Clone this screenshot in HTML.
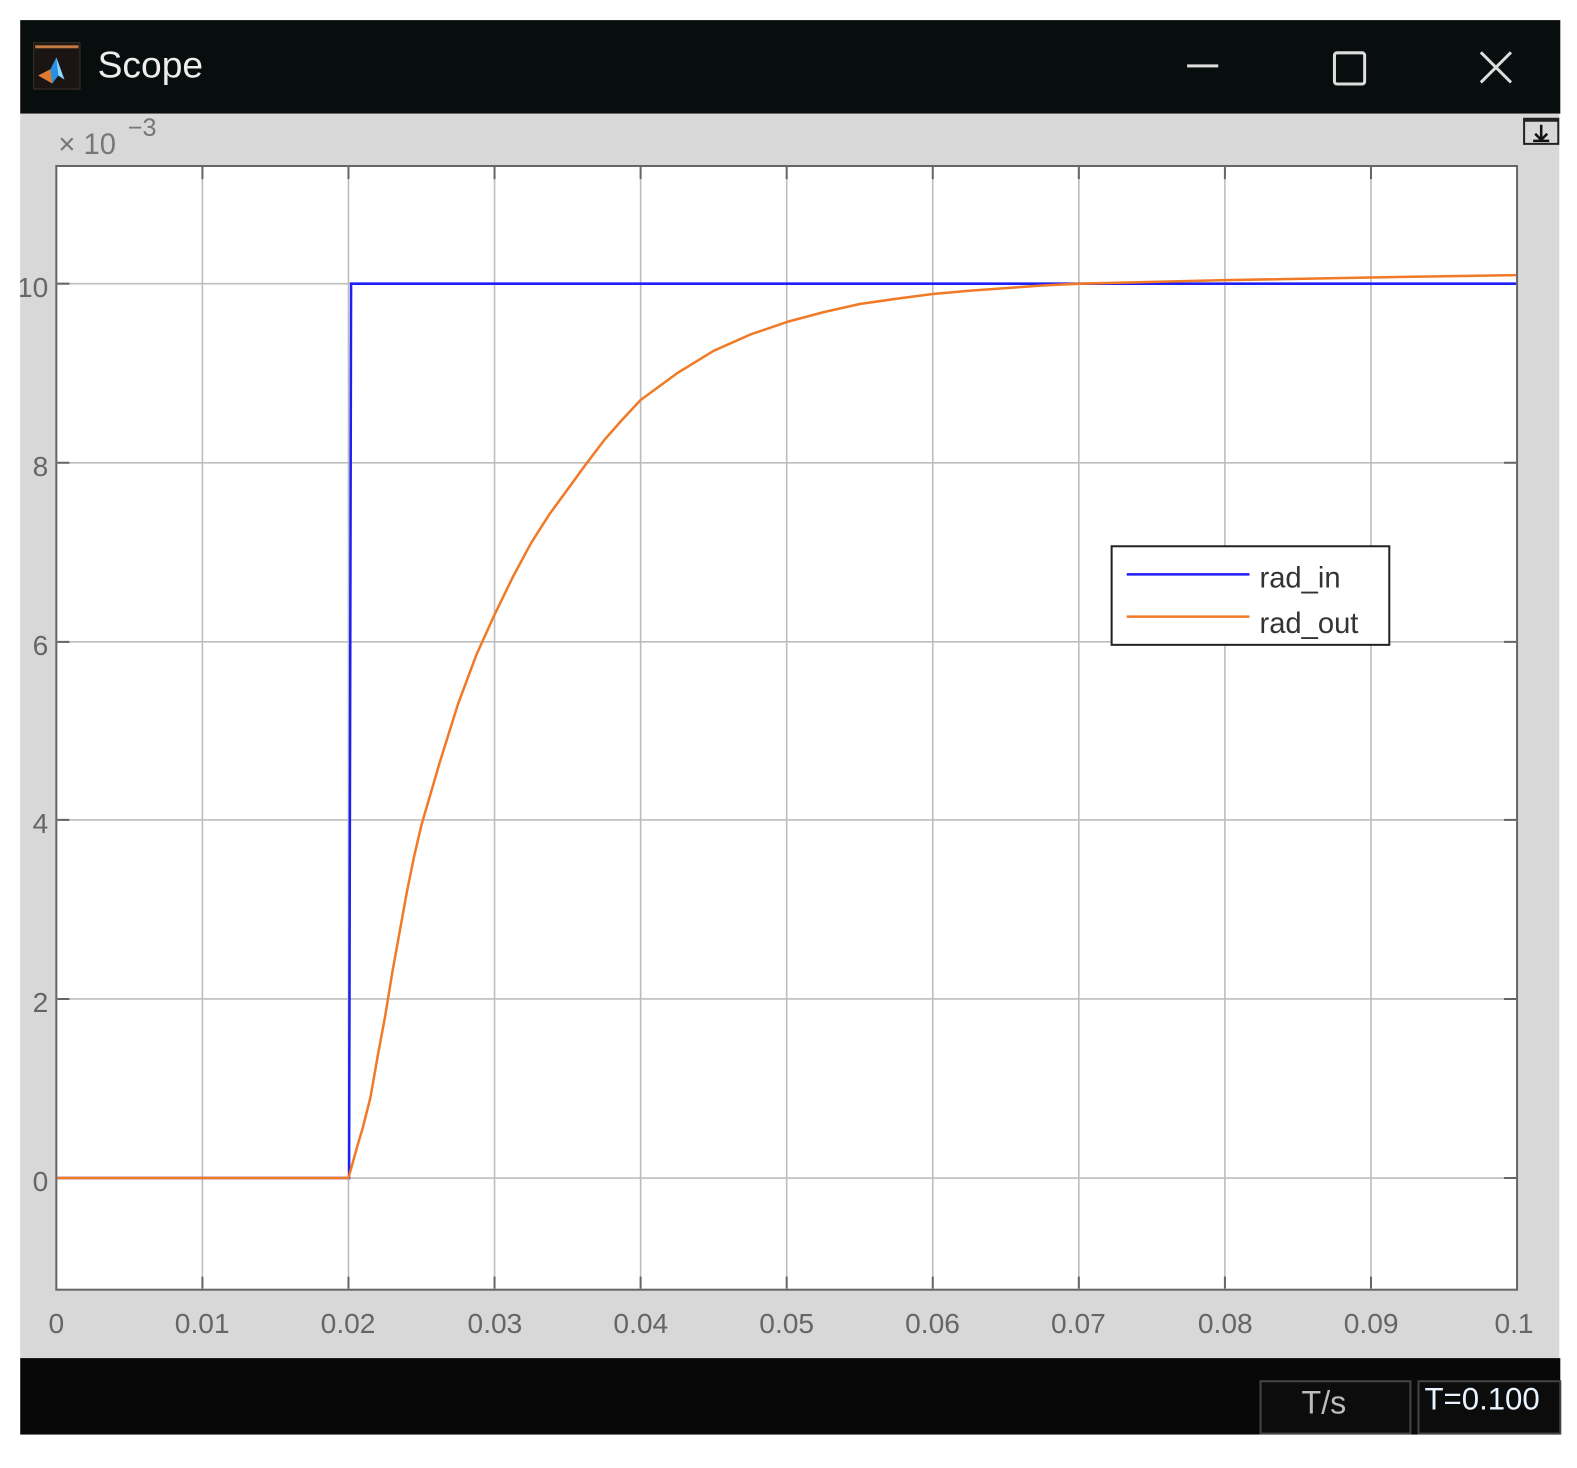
<!DOCTYPE html>
<html><head><style>
html,body{margin:0;padding:0;background:#fff;width:1577px;height:1459px;overflow:hidden;font-family:"Liberation Sans",sans-serif}
.abs{position:absolute}
#w{position:absolute;left:0;top:0;width:1577px;height:1459px;transform:scale(1.006);transform-origin:0 0}
</style></head><body><div id="w">
<div class="abs" style="left:20px;top:20px;width:1531px;height:93px;background:#080d0d"></div>
<div class="abs" style="left:20px;top:113px;width:1530px;height:1237px;background:#d8d8d8"></div>
<div class="abs" style="left:20px;top:1350px;width:1531px;height:76px;background:#080808"></div>
<div class="abs" style="left:33px;top:42px;width:47px;height:47px;background:#1a1512;border:1px solid #3a332d;box-sizing:border-box">
<div style="height:3px;background:#c07a40;margin:2px 1px"></div>
<svg width="45" height="38" viewBox="0 0 45 38" style="position:absolute;left:0;top:6px"><path d="M4 26 L16 20 L22 8 L30 30 L24 26 L18 34 Z" fill="#2a8fe0"/><path d="M4 26 L16 20 L18 34Z" fill="#e07a30"/><path d="M22 8 L30 30 L24 26Z" fill="#8fd8ff"/></svg>
</div>
<div class="abs" style="left:97px;top:44px;font-size:37px;color:#eee">Scope</div>
<div class="abs" style="left:1180px;top:64px;width:31px;height:3px;background:#ddd"></div>
<div class="abs" style="left:1325px;top:51px;width:27px;height:28px;border:3px solid #ddd;border-radius:4px"></div>
<svg class="abs" style="left:1470px;top:50px" width="34" height="34"><path d="M2 2L32 32M32 2L2 32" stroke="#ddd" stroke-width="3"/></svg>
<div class="abs" style="left:1514px;top:117px;width:36px;height:27px;border:2px solid #222;box-sizing:border-box;border-top-width:4px"></div>
<svg class="abs" style="left:1520px;top:122px" width="24" height="20"><path d="M12 2V16M6 11L12 17L18 11M4 18H20" stroke="#111" stroke-width="2.5" fill="none"/></svg>
<div class="abs" style="left:58px;top:128px;font-size:29px;color:#777">× 10</div>
<div class="abs" style="left:127px;top:113px;font-size:25px;color:#777">−3</div>
<svg class="abs" style="left:0;top:0" width="1577" height="1459">
<rect x="56" y="165" width="1452" height="1117" fill="#fff" stroke="#666" stroke-width="2"/>
<g stroke="#bdbdbd" stroke-width="1.6">
<path d="M201.2 166V1281M346.4 166V1281M491.6 166V1281M636.8 166V1281M782 166V1281M927.2 166V1281M1072.4 166V1281M1217.6 166V1281M1362.8 166V1281"/>
<path d="M57 1171H1507M57 993H1507M57 815H1507M57 638H1507M57 460H1507M57 282H1507"/>
</g>
<g stroke="#666" stroke-width="2">
<path d="M201.2 166v12M346.4 166v12M491.6 166v12M636.8 166v12M782 166v12M927.2 166v12M1072.4 166v12M1217.6 166v12M1362.8 166v12"/>
<path d="M201.2 1281v-12M346.4 1281v-12M491.6 1281v-12M636.8 1281v-12M782 1281v-12M927.2 1281v-12M1072.4 1281v-12M1217.6 1281v-12M1362.8 1281v-12"/>
<path d="M57 1171h12M57 993h12M57 815h12M57 638h12M57 460h12M57 282h12M1507 1171h-12M1507 993h-12M1507 815h-12M1507 638h-12M1507 460h-12M1507 282h-12"/>
</g>
<polyline points="57,1171 347,1171 349,282 1507,282" fill="none" stroke="#1f1ff5" stroke-width="2.5"/>
<polyline points="57,1171 346.4,1171 355,1140 360.9,1120 368.2,1091 375.4,1050 382.7,1011 390,966.5 397.2,926.5 404.5,886.5 411.7,851 419,819.8 437.2,757.6 455.3,699.8 473.5,651 491.6,611 509.7,573.7 527.9,539.8 546,511.4 564.2,486.5 582.4,461.5 600.5,437.6 618.7,417 636.8,397.6 673.1,371 709.4,348.7 745.7,332.6 782,320.1 818.3,310.4 854.6,302.2 890.9,297 927.2,292.3 963.5,289 999.8,286.4 1036.1,283.8 1072.4,282 1217.6,278.5 1362.8,275.8 1507,273.5" fill="none" stroke="#f07a26" stroke-width="2.5" stroke-linejoin="round"/>
<rect x="1105" y="543" width="276" height="98" fill="#fff" stroke="#222" stroke-width="2"/>
<path d="M1120 571H1242" stroke="#1f1ff5" stroke-width="2.5"/>
<path d="M1120 613H1242" stroke="#f07a26" stroke-width="2.5"/>
<g font-size="29" fill="#333" font-family="Liberation Sans,sans-serif">
<text x="1252" y="584">rad_in</text><text x="1252" y="629">rad_out</text>
</g>
<g font-size="28" fill="#666" font-family="Liberation Sans,sans-serif" text-anchor="end">
<text x="48" y="1184">0</text><text x="48" y="1006">2</text><text x="48" y="828">4</text><text x="48" y="651">6</text><text x="48" y="473">8</text><text x="48" y="295">10</text>
</g>
<g font-size="28" fill="#666" font-family="Liberation Sans,sans-serif" text-anchor="middle">
<text x="56" y="1325">0</text><text x="201" y="1325">0.01</text><text x="346" y="1325">0.02</text><text x="492" y="1325">0.03</text><text x="637" y="1325">0.04</text><text x="782" y="1325">0.05</text><text x="927" y="1325">0.06</text><text x="1072" y="1325">0.07</text><text x="1218" y="1325">0.08</text><text x="1363" y="1325">0.09</text><text x="1505" y="1325">0.1</text>
</g>
<rect x="0" y="0" width="20" height="1459" fill="#fff"/>
<rect x="1253" y="1373" width="149" height="52" fill="#0c0c0c" stroke="#444" stroke-width="2"/>
<rect x="1410" y="1373" width="141" height="52" fill="#0c0c0c" stroke="#444" stroke-width="2"/>
<text x="1316" y="1405" font-size="32" fill="#bbb" text-anchor="middle" font-family="Liberation Sans,sans-serif">T/s</text>
<text x="1416" y="1401" font-size="31" fill="#e8f4ff" font-family="Liberation Sans,sans-serif">T=0.100</text>
</svg>
</div></body></html>
